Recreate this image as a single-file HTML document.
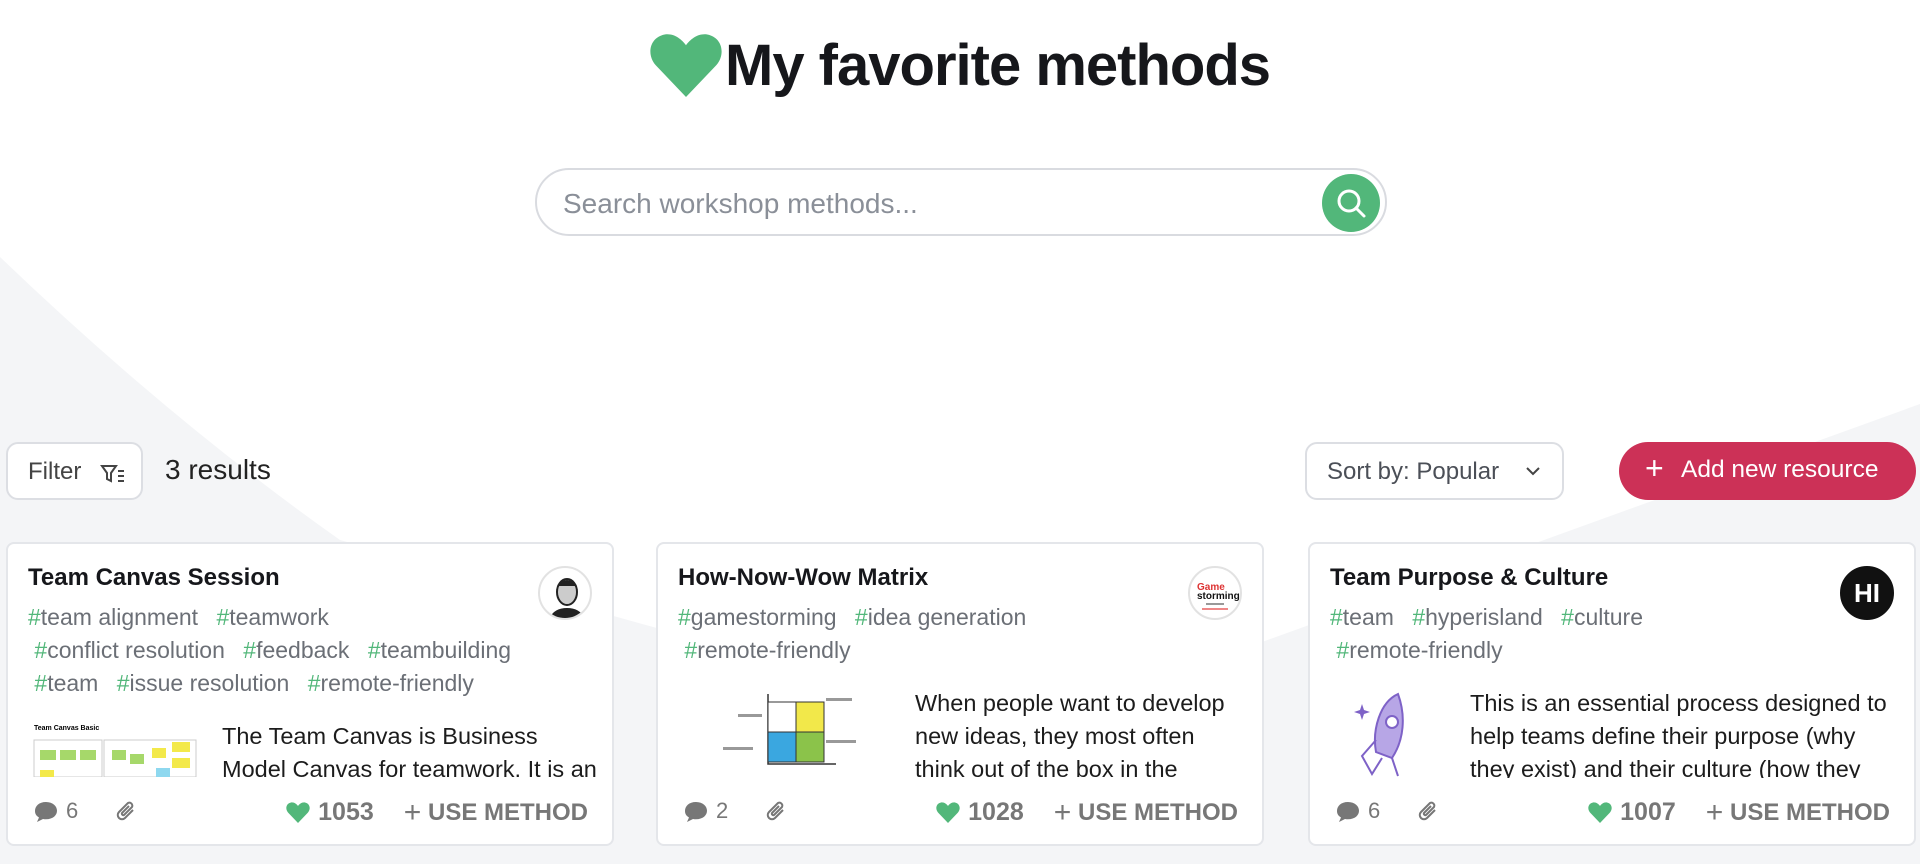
<!DOCTYPE html>
<html><head><meta charset="utf-8"><style>
*{box-sizing:border-box;margin:0;padding:0}
body{width:1920px;height:864px;overflow:hidden;background:#f4f5f7;font-family:"Liberation Sans",sans-serif;position:relative;color:#111}
.bg{position:absolute;left:0;top:0}
.title{position:absolute;left:649px;top:30px;height:70px;display:flex;align-items:center}
.title h1{font-size:58px;font-weight:bold;letter-spacing:-1px;color:#16171b;margin-left:2px;white-space:nowrap}
.search{position:absolute;left:535px;top:168px;width:852px;height:68px;border:2px solid #d9dbe0;border-radius:34px;background:#fff}
.search span{position:absolute;left:26px;top:18px;font-size:28px;color:#8a8f98}
.search .btn{position:absolute;right:5px;top:4px;width:58px;height:58px;border-radius:50%;background:#52b77a}
.filter{position:absolute;left:6px;top:442px;width:137px;height:58px;border:2px solid #dcdee3;border-radius:12px;background:#fff;font-size:24px;color:#444;padding:14px 0 0 20px}
.res{position:absolute;left:165px;top:454px;font-size:28px;color:#222}
.sort{position:absolute;left:1305px;top:442px;width:259px;height:58px;border:2px solid #dcdee3;border-radius:12px;background:#fff;font-size:24px;color:#4b4f57;padding:14px 0 0 20px}
.add{position:absolute;left:1619px;top:442px;width:297px;height:58px;border-radius:29px;background:#cc3157;color:#fff;font-size:24.5px;padding:14px 0 0 62px}
.add i{position:absolute;left:26px;top:8px;font-style:normal;font-size:32px;font-weight:300}
.card{position:absolute;top:542px;width:608px;height:304px;background:#fff;border:2px solid #e4e6ea;border-radius:8px}
.card h3{position:absolute;left:20px;top:20px;font-size:24px;font-weight:bold;color:#16171b}
.tags{position:absolute;left:20px;top:57px;width:570px;font-size:23px;color:#6b6f76;line-height:33px}
.tags b{font-weight:normal;margin-right:12px;white-space:nowrap}
.tags b:before{content:"#";color:#52b77a}
.av{position:absolute;right:20px;top:22px;width:54px;height:54px;border-radius:50%;border:2px solid #e2e2e2;background:#fff;overflow:hidden}
.desc{position:absolute;top:176px;height:58px;overflow:hidden;font-size:23.5px;line-height:33px;color:#1c1c1c}
.foot{position:absolute;left:0;right:0;top:252px;height:30px;font-size:22px;color:#777}
.foot .n{position:absolute;left:58px;top:2px}
.likes{position:absolute;right:0;top:0px;font-weight:bold;color:#777;font-size:24px}
.likes .c{margin:0 30px 0 8px;font-size:25px}
</style></head><body>
<svg class="bg" width="1920" height="864"><path d="M0,0H1920V404L1240,650Q960,760 700,640L340,540Q170,420 0,257Z" fill="#fff"/></svg>
<div class="title"><svg width="74" height="64" viewBox="0 0 24 21"><path d="M12 21 2 10.5C-1 7 0 1.5 5 .5 8 0 10.5 2 12 4 13.5 2 16 0 19 .5 24 1.5 25 7 22 10.5Z" fill="#52b77a"/></svg><h1>My favorite methods</h1></div>
<div class="search"><span>Search workshop methods...</span><div class="btn"><svg width="58" height="58" viewBox="0 0 58 58"><circle cx="27" cy="27" r="10" fill="none" stroke="#fff" stroke-width="3"/><path d="M34 34l8 8" stroke="#fff" stroke-width="3" stroke-linecap="round"/></svg></div></div>
<div class="filter">Filter <svg style="position:absolute;left:92px;top:20px" width="26" height="20" viewBox="0 0 26 20"><path d="M2 2h14l-5 7v8l-4-2V9Z" fill="none" stroke="#444" stroke-width="2"/><path d="M18 7h6M18 12h6M18 17h6" stroke="#444" stroke-width="2"/></svg></div>
<div class="res">3 results</div>
<div class="sort">Sort by: Popular <svg style="position:absolute;left:218px;top:22px" width="16" height="10" viewBox="0 0 16 10"><path d="M2 2l6 6 6-6" fill="none" stroke="#444" stroke-width="2"/></svg></div>
<div class="add"><i>+</i>Add new resource</div>

<div class="card" style="left:6px">
<h3>Team Canvas Session</h3>
<div class="av"><svg width="54" height="54"><ellipse cx="27" cy="24" rx="10" ry="13" fill="#ccc" stroke="#222" stroke-width="2"/><path d="M17 18q10-12 20 0" fill="#222"/><path d="M8 54q4-14 19-14t19 14Z" fill="#222"/></svg></div>
<div class="tags"><b>team alignment</b> <b>teamwork</b><br>&nbsp;<b>conflict resolution</b> <b>feedback</b> <b>teambuilding</b><br>&nbsp;<b>team</b> <b>issue resolution</b> <b>remote-friendly</b></div>
<svg style="position:absolute;left:24px;top:178px" width="166" height="55"><rect width="166" height="55" fill="#fff"/><text x="2" y="8" font-size="7" font-weight="bold" font-family="Liberation Sans">Team Canvas Basic</text><rect x="2" y="18" width="68" height="37" fill="none" stroke="#ccc"/><rect x="72" y="18" width="92" height="37" fill="none" stroke="#ccc"/><g fill="#a6d86a"><rect x="8" y="28" width="16" height="10"/><rect x="28" y="28" width="16" height="10"/><rect x="48" y="28" width="16" height="10"/><rect x="80" y="28" width="14" height="10"/><rect x="98" y="32" width="14" height="10"/></g><g fill="#f3e94a"><rect x="140" y="20" width="18" height="10"/><rect x="120" y="26" width="14" height="10"/><rect x="140" y="36" width="18" height="10"/><rect x="8" y="48" width="14" height="7"/></g><rect x="124" y="46" width="14" height="9" fill="#8ed8ef"/></svg>
<div class="desc" style="left:214px;width:375px">The Team Canvas is Business Model Canvas for teamwork. It is an</div>
<div class="foot"><svg style="position:absolute;left:26px;top:5px" width="24" height="22" viewBox="0 0 24 22"><path d="M12 1C5 1 1 5 1 10c0 3 1.5 5 4 6.5L3 21l6-3c1 .2 2 .3 3 .3 7 0 11-4 11-8.5S19 1 12 1Z" fill="#777"/></svg><span class="n">6</span><svg style="position:absolute;left:108px;top:4px" width="22" height="24" viewBox="0 0 22 24"><path d="M17 10l-8 8a4 4 0 0 1-6-6l9-9a3 3 0 0 1 4 4l-8 8a1.5 1.5 0 0 1-2-2l7-7" fill="none" stroke="#777" stroke-width="2"/></svg>
<span class="likes" style="right:24px"><svg style="vertical-align:-3px" width="24" height="21" viewBox="0 0 24 21"><path d="M12 21 2 10.5C-1 7 0 1.5 5 .5 8 0 10.5 2 12 4 13.5 2 16 0 19 .5 24 1.5 25 7 22 10.5Z" fill="#52b77a"/></svg><span class="c">1053</span><span style="font-weight:300;font-size:30px;vertical-align:-2px">+</span> USE METHOD</span></div>
</div>

<div class="card" style="left:656px">
<h3>How-Now-Wow Matrix</h3>
<div class="av"><svg width="54" height="54"><text x="7" y="22" font-size="10" font-weight="bold" fill="#d33" font-family="Liberation Sans">Game</text><text x="7" y="31" font-size="10" font-weight="bold" fill="#111" font-family="Liberation Sans">storming</text><rect x="16" y="35" width="18" height="2" fill="#999"/><rect x="12" y="40" width="26" height="2" fill="#e88"/></svg></div>
<div class="tags"><b>gamestorming</b> <b>idea generation</b><br>&nbsp;<b>remote-friendly</b></div>
<svg style="position:absolute;left:60px;top:148px" width="140" height="85"><path d="M50 2V72H118" fill="none" stroke="#333" stroke-width="1.5"/><rect x="50" y="10" width="28" height="30" fill="#fff" stroke="#333"/><rect x="78" y="10" width="28" height="30" fill="#f2e84a" stroke="#333"/><rect x="50" y="40" width="28" height="30" fill="#3aa7e0" stroke="#333"/><rect x="78" y="40" width="28" height="30" fill="#8bc34a" stroke="#333"/><g fill="#999"><rect x="20" y="22" width="24" height="3"/><rect x="5" y="55" width="30" height="3"/><rect x="108" y="6" width="26" height="3"/><rect x="108" y="48" width="30" height="3"/></g></svg>
<div class="desc" style="left:257px;top:143px;height:91px;width:322px">When people want to develop new ideas, they most often think out of the box in the</div>
<div class="foot"><svg style="position:absolute;left:26px;top:5px" width="24" height="22" viewBox="0 0 24 22"><path d="M12 1C5 1 1 5 1 10c0 3 1.5 5 4 6.5L3 21l6-3c1 .2 2 .3 3 .3 7 0 11-4 11-8.5S19 1 12 1Z" fill="#777"/></svg><span class="n">2</span><svg style="position:absolute;left:108px;top:4px" width="22" height="24" viewBox="0 0 22 24"><path d="M17 10l-8 8a4 4 0 0 1-6-6l9-9a3 3 0 0 1 4 4l-8 8a1.5 1.5 0 0 1-2-2l7-7" fill="none" stroke="#777" stroke-width="2"/></svg>
<span class="likes" style="right:24px"><svg style="vertical-align:-3px" width="24" height="21" viewBox="0 0 24 21"><path d="M12 21 2 10.5C-1 7 0 1.5 5 .5 8 0 10.5 2 12 4 13.5 2 16 0 19 .5 24 1.5 25 7 22 10.5Z" fill="#52b77a"/></svg><span class="c">1028</span><span style="font-weight:300;font-size:30px;vertical-align:-2px">+</span> USE METHOD</span></div>
</div>

<div class="card" style="left:1308px">
<h3>Team Purpose &amp; Culture</h3>
<div class="av" style="background:#111;border-color:#111;color:#fff;font-weight:bold;font-size:26px;text-align:center;line-height:50px">HI</div>
<div class="tags"><b>team</b> <b>hyperisland</b> <b>culture</b><br>&nbsp;<b>remote-friendly</b></div>
<svg style="position:absolute;left:40px;top:146px" width="80" height="90" viewBox="0 0 80 90"><path d="M48 4C30 12 22 40 26 62l16 6C54 50 56 26 48 4Z" fill="#b7a6e6" stroke="#7e62c7" stroke-width="2"/><circle cx="42" cy="32" r="6" fill="#fff" stroke="#7e62c7" stroke-width="2"/><path d="M26 50 12 66 22 84 32 68M42 68 48 86" fill="none" stroke="#7e62c7" stroke-width="2"/><path d="M12 14l2 6 6 2-6 2-2 6-2-6-6-2 6-2Z" fill="#7e62c7"/></svg>
<div class="desc" style="left:160px;top:143px;height:91px;width:420px">This is an essential process designed to help teams define their purpose (why they exist) and their culture (how they</div>
<div class="foot"><svg style="position:absolute;left:26px;top:5px" width="24" height="22" viewBox="0 0 24 22"><path d="M12 1C5 1 1 5 1 10c0 3 1.5 5 4 6.5L3 21l6-3c1 .2 2 .3 3 .3 7 0 11-4 11-8.5S19 1 12 1Z" fill="#777"/></svg><span class="n">6</span><svg style="position:absolute;left:108px;top:4px" width="22" height="24" viewBox="0 0 22 24"><path d="M17 10l-8 8a4 4 0 0 1-6-6l9-9a3 3 0 0 1 4 4l-8 8a1.5 1.5 0 0 1-2-2l7-7" fill="none" stroke="#777" stroke-width="2"/></svg>
<span class="likes" style="right:24px"><svg style="vertical-align:-3px" width="24" height="21" viewBox="0 0 24 21"><path d="M12 21 2 10.5C-1 7 0 1.5 5 .5 8 0 10.5 2 12 4 13.5 2 16 0 19 .5 24 1.5 25 7 22 10.5Z" fill="#52b77a"/></svg><span class="c">1007</span><span style="font-weight:300;font-size:30px;vertical-align:-2px">+</span> USE METHOD</span></div>
</div>
</body></html>
